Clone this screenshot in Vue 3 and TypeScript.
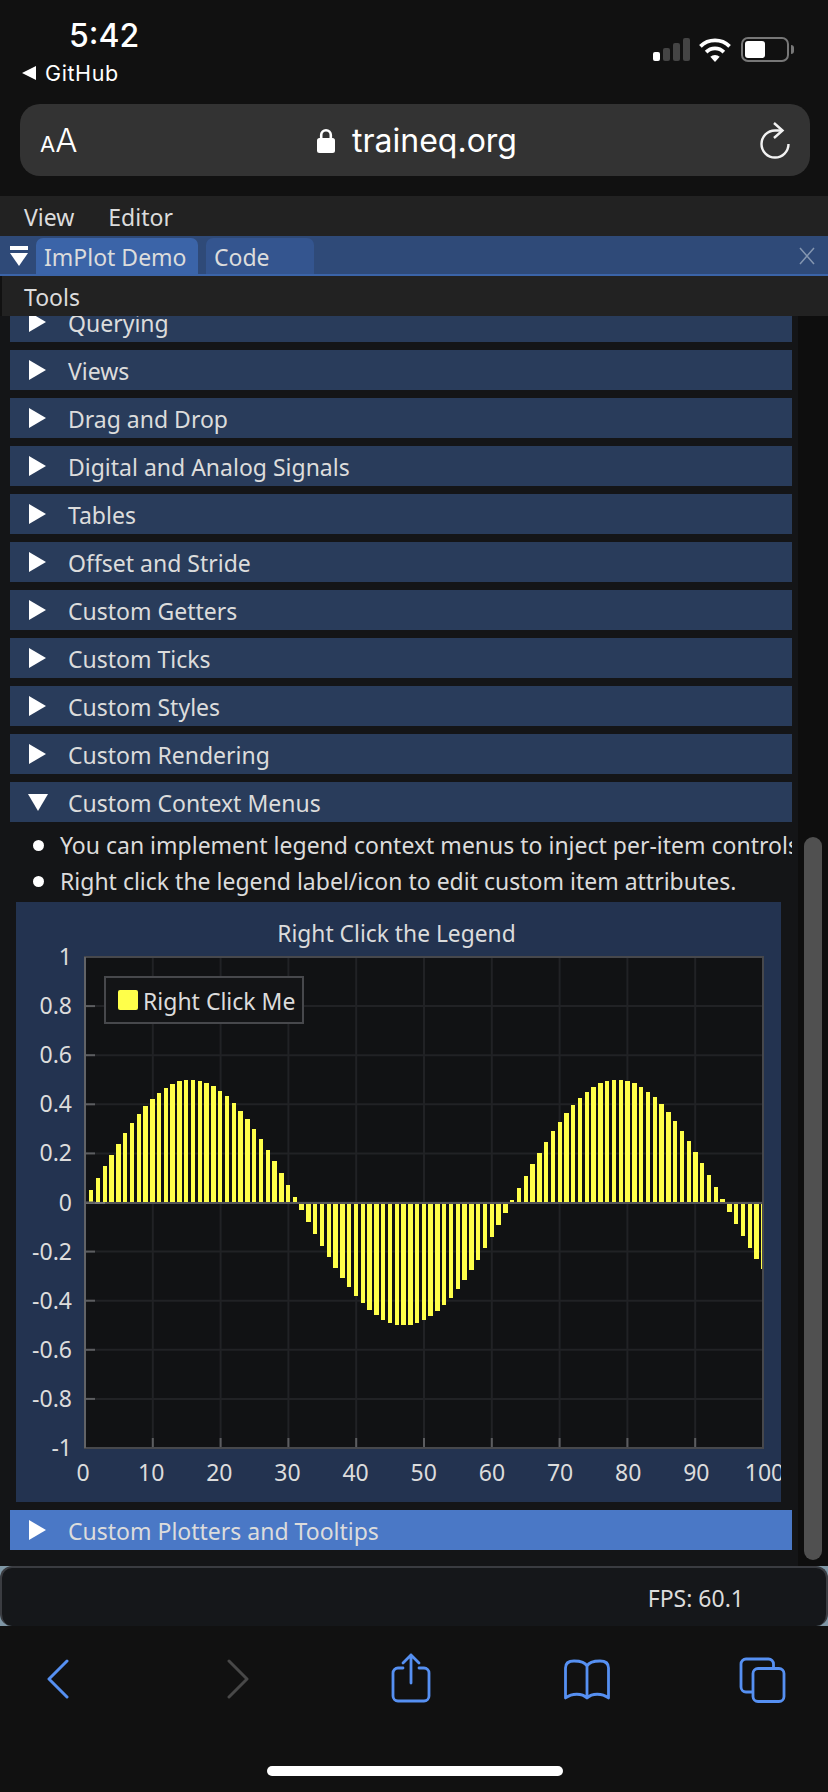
<template>
  <div class="phone">
    <!-- iOS status bar -->
    <div class="status">
      <div class="status-left">
        <div class="time">5:42</div>
        <div class="back-app"><span class="back-tri"></span>GitHub</div>
      </div>
      <div class="status-right">
        <div class="signal">
          <i class="on s1"></i><i class="s2"></i><i class="s3"></i><i class="s4"></i>
        </div>
        <svg class="wifi" width="34" height="25" viewBox="0 0 32 24" fill="none" stroke="#fff" stroke-width="3.6">
          <path d="M2 9A20 20 0 0 1 30 9" />
          <path d="M7.5 14.5A12 12 0 0 1 24.5 14.5" />
          <path d="M11.5 19A6.5 6.5 0 0 1 20.5 19L16 24Z" fill="#fff" stroke="none" />
        </svg>
        <div class="battery"><div class="level"></div></div>
        <div class="nub"></div>
      </div>
    </div>

    <!-- Safari address bar -->
    <div class="urlbar-wrap">
      <div class="urlbar">
        <span class="aa"><span class="small-a">A</span>A</span>
        <div class="address">
          <svg width="18" height="25" viewBox="0 0 18 25">
            <path d="M4.2 11V7a4.8 4.8 0 0 1 9.6 0v4" fill="none" stroke="#fff" stroke-width="2.6" />
            <rect x="0" y="10" width="18" height="15" rx="2.5" fill="#fff" />
          </svg>
          <span>traineq.org</span>
        </div>
        <svg class="reload" width="33" height="38" viewBox="0 0 33 38" fill="none" stroke="#f2f2f2" stroke-width="2.4">
          <path d="M15 2l8.5 7.5L15 17" />
          <path d="M23 9.5h-7A13.5 13.5 0 1 0 29.5 23" />
        </svg>
      </div>
    </div>

    <!-- ImGui main menu -->
    <div class="menubar">
      <span>View</span>
      <span>Editor</span>
    </div>

    <div class="titlebar">
      <svg class="collapse" width="18" height="20" viewBox="0 0 18 20">
        <rect width="18" height="4" fill="#fff" />
        <path d="M0 7h18l-9 13z" fill="#fff" />
      </svg>
      <div class="tab active">ImPlot Demo</div>
      <div class="tab">Code</div>
      <svg class="close" width="16" height="18" viewBox="0 0 16 18" stroke="#8496b0" stroke-width="1.5">
        <path d="M1 1l14 16M15 1L1 17" />
      </svg>
    </div>

    <div class="toolsbar"><span>Tools</span></div>

    <div class="content">
      <div class="tree">
        <div v-for="name in closedRows" :key="name" class="row">
          <span class="tri-right"></span>{{ name }}
        </div>
        <div class="row">
          <span class="tri-down"></span>Custom Context Menus
        </div>

        <ul class="notes">
          <li>You can implement legend context menus to inject per-item controls and widgets.</li>
          <li>Right click the legend label/icon to edit custom item attributes.</li>
        </ul>

        <div class="plot-frame">
          <!-- viewBox uses the page's own coordinates so the data maps 1:1 -->
          <svg class="plot" width="765" height="600" viewBox="16 902 765 600">
            <rect x="85" y="957" width="678" height="491" fill="#111214" />

            <g stroke="#212225" stroke-width="2">
              <line v-for="t in xTicks" :key="'gx' + t.label" :x1="t.x" y1="957" :x2="t.x" y2="1448" />
              <line v-for="t in yTicks" :key="'gy' + t.label" x1="85" :y1="t.y" x2="763" :y2="t.y" />
            </g>

            <rect
              v-for="b in bars"
              :key="b.i"
              :x="b.x"
              :y="b.y"
              :width="b.w"
              :height="b.h"
              fill="#ffff4a"
              shape-rendering="crispEdges"
            />

            <line x1="85" y1="1203" x2="763" y2="1203" stroke="#55565a" stroke-width="2" />
            <line x1="85" y1="1203" x2="105" y2="1203" stroke="#77787a" stroke-width="2" />

            <g stroke="#5c5d60" stroke-width="2">
              <line v-for="t in xTicks" :key="'tx' + t.label" :x1="t.x" y1="1438" :x2="t.x" y2="1448" />
              <line v-for="t in yTicks" :key="'ty' + t.label" x1="85" :y1="t.y" x2="95" :y2="t.y" />
            </g>

            <rect x="85" y="957" width="678" height="491" fill="none" stroke="#47484c" stroke-width="2" />
            <line x1="85" y1="957" x2="85" y2="1448" stroke="#626366" stroke-width="2" />

            <g class="legend">
              <rect x="105" y="977" width="198" height="46" fill="#131416" stroke="#47484c" stroke-width="2" />
              <rect x="118" y="990" width="20" height="20" rx="2" fill="#ffff4a" />
              <text x="143" y="1010">Right Click Me</text>
            </g>

            <text class="title" x="396.5" y="942">Right Click the Legend</text>
            <text v-for="t in yTicks" :key="'ly' + t.label" class="ylabel" x="72" :y="t.y + 8">{{ t.label }}</text>
            <text v-for="t in xTicks" :key="'lx' + t.label" class="xlabel" :x="t.labelX" y="1481">{{ t.label }}</text>
          </svg>
        </div>

        <div class="row selected">
          <span class="tri-right"></span>Custom Plotters and Tooltips
        </div>
      </div>

      <div class="track"><div class="thumb"></div></div>
    </div>

    <!-- second ImGui window with the frame rate -->
    <div class="fps-wrap">
      <div class="fps">FPS: 60.1</div>
    </div>

    <!-- Safari toolbar -->
    <div class="toolbar">
      <svg class="t-back" width="24" height="40" viewBox="0 0 24 40" fill="none" stroke="#5690f2" stroke-width="3" stroke-linecap="round" stroke-linejoin="round">
        <path d="M21 2L3 20l18 18" />
      </svg>
      <svg class="t-forward" width="24" height="40" viewBox="0 0 24 40" fill="none" stroke="#484848" stroke-width="3" stroke-linecap="round" stroke-linejoin="round">
        <path d="M3 2l18 18L3 38" />
      </svg>
      <svg class="t-share" width="40" height="50" viewBox="0 0 40 50" fill="none" stroke="#5690f2" stroke-width="2.8" stroke-linecap="round" stroke-linejoin="round">
        <path d="M12 15H7a5 5 0 0 0-5 5v23a5 5 0 0 0 5 5h26a5 5 0 0 0 5-5V20a5 5 0 0 0-5-5h-5" />
        <path d="M20 30V2M12 10l8-8 8 8" />
      </svg>
      <svg class="t-book" width="48" height="42" viewBox="0 0 48 42" fill="none" stroke="#5690f2" stroke-width="2.8" stroke-linejoin="round">
        <path d="M24 39C19 34 9 34 2.500 39V9C2.500 4 6 2 11 2C17 2 22 3 24 7C26 3 31 2 37 2C42 2 45.500 4 45.500 9V39C39 34 29 34 24 39ZM24 7V39" />
      </svg>
      <svg class="t-tabs" width="48" height="48" viewBox="0 0 48 48" fill="none" stroke="#5690f2" stroke-width="2.8" stroke-linejoin="round">
        <path d="M35.500 12V8a5 5 0 0 0-5-5H8a5 5 0 0 0-5 5v23a5 5 0 0 0 5 5h6" />
        <rect x="15" y="12.500" width="31" height="33" rx="5" />
      </svg>
    </div>

    <div class="home-wrap"><div class="home"></div></div>
  </div>
</template>

<script setup lang="ts">
const closedRows = [
  'Querying',
  'Views',
  'Drag and Drop',
  'Digital and Analog Signals',
  'Tables',
  'Offset and Stride',
  'Custom Getters',
  'Custom Ticks',
  'Custom Styles',
  'Custom Rendering',
];

const PLOT_LEFT = 85;
const PLOT_RIGHT = 763;
const PLOT_TOP = 957;
const PLOT_H = 491;
const ZERO_Y = 1202.5;
const BAR_W = 4.4;

const xTicks = Array.from({ length: 11 }, (_, i) => {
  const x = PLOT_LEFT + (i * (PLOT_RIGHT - PLOT_LEFT)) / 10;
  return {
    label: String(i * 10),
    x,
    // labels drift a little to the right of their ticks along the axis
    labelX: x - 2 + 0.35 * i,
  };
});

const yTicks = ['1', '0.8', '0.6', '0.4', '0.2', '0', '-0.2', '-0.4', '-0.6', '-0.8', '-1'].map((label, i) => ({
  label,
  y: PLOT_TOP + (i * PLOT_H) / 10,
}));

// same signal as the demo: 0.5 * sin(x / 10)
const bars = Array.from({ length: 100 }, (_, n) => {
  const i = n + 1;
  const v = 0.5 * Math.sin(i / 10);
  const h = Math.abs(v) * 246;
  const x = 84.4 + 6.79 * i - BAR_W / 2;
  return {
    i,
    x,
    y: v > 0 ? ZERO_Y - h : ZERO_Y,
    w: Math.min(BAR_W, PLOT_RIGHT + 1 - x),
    h,
  };
});
</script>

<style>
html,
body {
  background: #111;
}
</style>

<style scoped>
.phone {
  width: 828px;
  height: 1792px;
  overflow: hidden;
  display: flex;
  flex-direction: column;
  background: #111;
  color: #dcdcdc;
  font-family: "Noto Sans", "Open Sans", sans-serif;
}

.status {
  height: 104px;
  flex: none;
  display: flex;
  justify-content: space-between;
  color: #fff;
  font-family: Inter, "Liberation Sans", sans-serif;
}

.status-left {
  padding: 17px 0 0 22px;
}

.time {
  font-size: 32px;
  font-weight: 500;
  line-height: 38px;
  padding-left: 47px;
}

.back-app {
  display: flex;
  align-items: center;
  gap: 9px;
  margin-top: 4px;
  font-size: 21.5px;
  line-height: 28px;
  letter-spacing: 0.6px;
}

.back-tri {
  width: 0;
  height: 0;
  border-top: 7px solid transparent;
  border-bottom: 7px solid transparent;
  border-right: 14px solid #fff;
}

.status-right {
  display: flex;
  align-items: flex-start;
  padding: 37px 34px 0 0;
}

.signal {
  display: flex;
  align-items: flex-end;
  gap: 3px;
  height: 24px;
  margin-right: 8px;
}

.signal i {
  width: 7px;
  border-radius: 2px;
  background: #444;
}

.signal .on {
  background: #fff;
}

.s1 { height: 9px; }
.s2 { height: 13px; }
.s3 { height: 18px; }
.s4 { height: 23px; }

.wifi {
  margin-right: 9px;
}

.battery {
  width: 48px;
  height: 25px;
  box-sizing: border-box;
  border: 2px solid #777;
  border-radius: 7px;
  padding: 2px;
}

.level {
  width: 20px;
  height: 17px;
  border-radius: 3px;
  background: #fff;
}

.nub {
  width: 3px;
  height: 9px;
  margin: 8px 0 0 2px;
  background: #777;
  border-radius: 0 3px 3px 0;
}

.urlbar-wrap {
  flex: none;
  height: 92px;
  padding: 0 18px 0 20px;
}

.urlbar {
  position: relative;
  height: 72px;
  border-radius: 20px;
  background: #333;
  color: #fff;
  display: flex;
  align-items: center;
  justify-content: center;
}

.aa {
  position: absolute;
  left: 20px;
  top: 16px;
  font-family: Inter, "Liberation Sans", sans-serif;
  font-size: 33px;
  font-weight: 300;
  line-height: 40px;
}

.small-a {
  font-size: 22px;
  font-weight: 400;
}

.address {
  display: flex;
  align-items: center;
  gap: 17px;
  font-family: Inter, "Liberation Sans", sans-serif;
  font-size: 32px;
  margin-left: 4px;
}

.reload {
  position: absolute;
  right: 18px;
  top: 17px;
}

.menubar {
  flex: none;
  height: 40px;
  box-sizing: border-box;
  display: flex;
  align-items: center;
  gap: 34px;
  padding: 2px 0 0 24px;
  background: #222;
  font-size: 23px;
}

.titlebar {
  flex: none;
  height: 40px;
  box-sizing: border-box;
  display: flex;
  align-items: flex-end;
  gap: 8px;
  background: #2f4a78;
  border-bottom: 2px solid #3b64a8;
  position: relative;
}

.collapse {
  align-self: flex-start;
  margin: 10px 0 0 10px;
}

.tab {
  height: 36px;
  box-sizing: border-box;
  padding: 0 0 0 8px;
  width: 108px;
  border-radius: 7px 7px 0 0;
  background: #34558f;
  font-size: 23px;
  line-height: 38px;
}

.tab.active {
  width: 162px;
  background: #3b64a8;
}

.close {
  position: absolute;
  right: 13px;
  top: 11px;
}

.toolsbar {
  flex: none;
  height: 40px;
  margin-left: 2px;
  padding-left: 22px;
  background: #222;
  font-size: 23px;
  line-height: 42px;
}

.content {
  flex: none;
  height: 1250px;
  display: flex;
  background: #141517;
}

.tree {
  width: 798px;
  overflow: hidden;
}

.row {
  width: 782px;
  height: 40px;
  box-sizing: border-box;
  padding-top: 2px;
  margin: 0 0 8px 10px;
  display: flex;
  align-items: center;
  background: #293c5b;
  font-size: 23px;
}

/* the list is scrolled, so the first row sits under the tools bar */
.row:first-child {
  margin-top: -14px;
}

.row.selected {
  background: #4a78c6;
}

.tri-right {
  width: 0;
  height: 0;
  margin: -2px 22px 0 19px;
  border-top: 10px solid transparent;
  border-bottom: 10px solid transparent;
  border-left: 17px solid #fff;
}

.tri-down {
  width: 0;
  height: 0;
  margin: -2px 20px 0 18px;
  border-left: 10px solid transparent;
  border-right: 10px solid transparent;
  border-top: 17px solid #fff;
}

.notes {
  list-style: none;
  width: 792px;
  margin: -3px 0 3px;
  padding: 0;
  overflow: hidden;
  font-size: 23px;
}

.notes li {
  position: relative;
  height: 36px;
  line-height: 36px;
  padding-left: 60px;
  white-space: nowrap;
}

.notes li::before {
  content: "";
  position: absolute;
  left: 33px;
  top: 13px;
  width: 11px;
  height: 11px;
  border-radius: 50%;
  background: #fff;
}

.plot-frame {
  width: 765px;
  height: 600px;
  margin: 0 0 8px 16px;
  background: #233350;
}

.plot {
  display: block;
}

.plot text {
  font-family: "Noto Sans", "Open Sans", sans-serif;
  font-size: 23px;
  fill: #dcdcdc;
}

.plot .title {
  font-size: 22.8px;
  text-anchor: middle;
}

.plot .ylabel {
  text-anchor: end;
}

.plot .xlabel {
  text-anchor: middle;
}

.track {
  flex: 1;
  background: #0e0e0e;
}

.thumb {
  width: 18px;
  height: 723px;
  margin: 521px 0 0 6px;
  border-radius: 9px;
  background: #505050;
}

.fps-wrap {
  flex: none;
  height: 60px;
  background: #7f97a6;
}

.fps {
  height: 60px;
  box-sizing: border-box;
  padding: 0 82px 0 0;
  border: 2px solid #3a3c41;
  border-bottom: 0;
  border-radius: 12px;
  background: #15171a;
  text-align: right;
  font-size: 23px;
  line-height: 60px;
}

.toolbar {
  flex: none;
  height: 130px;
  box-sizing: border-box;
  display: flex;
  align-items: flex-start;
  padding: 27px 0 0 46px;
  background: #111;
}

.t-back {
  margin-top: 6px;
}

.t-forward {
  margin: 6px 0 0 156px;
}

.t-share {
  margin-left: 141px;
}

.t-book {
  margin: 6px 0 0 132px;
}

.t-tabs {
  margin: 3px 0 0 127px;
}

.home-wrap {
  flex: 1;
  padding: 10px 0 0 267px;
}

.home {
  width: 296px;
  height: 10px;
  border-radius: 5px;
  background: #fff;
}
</style>
